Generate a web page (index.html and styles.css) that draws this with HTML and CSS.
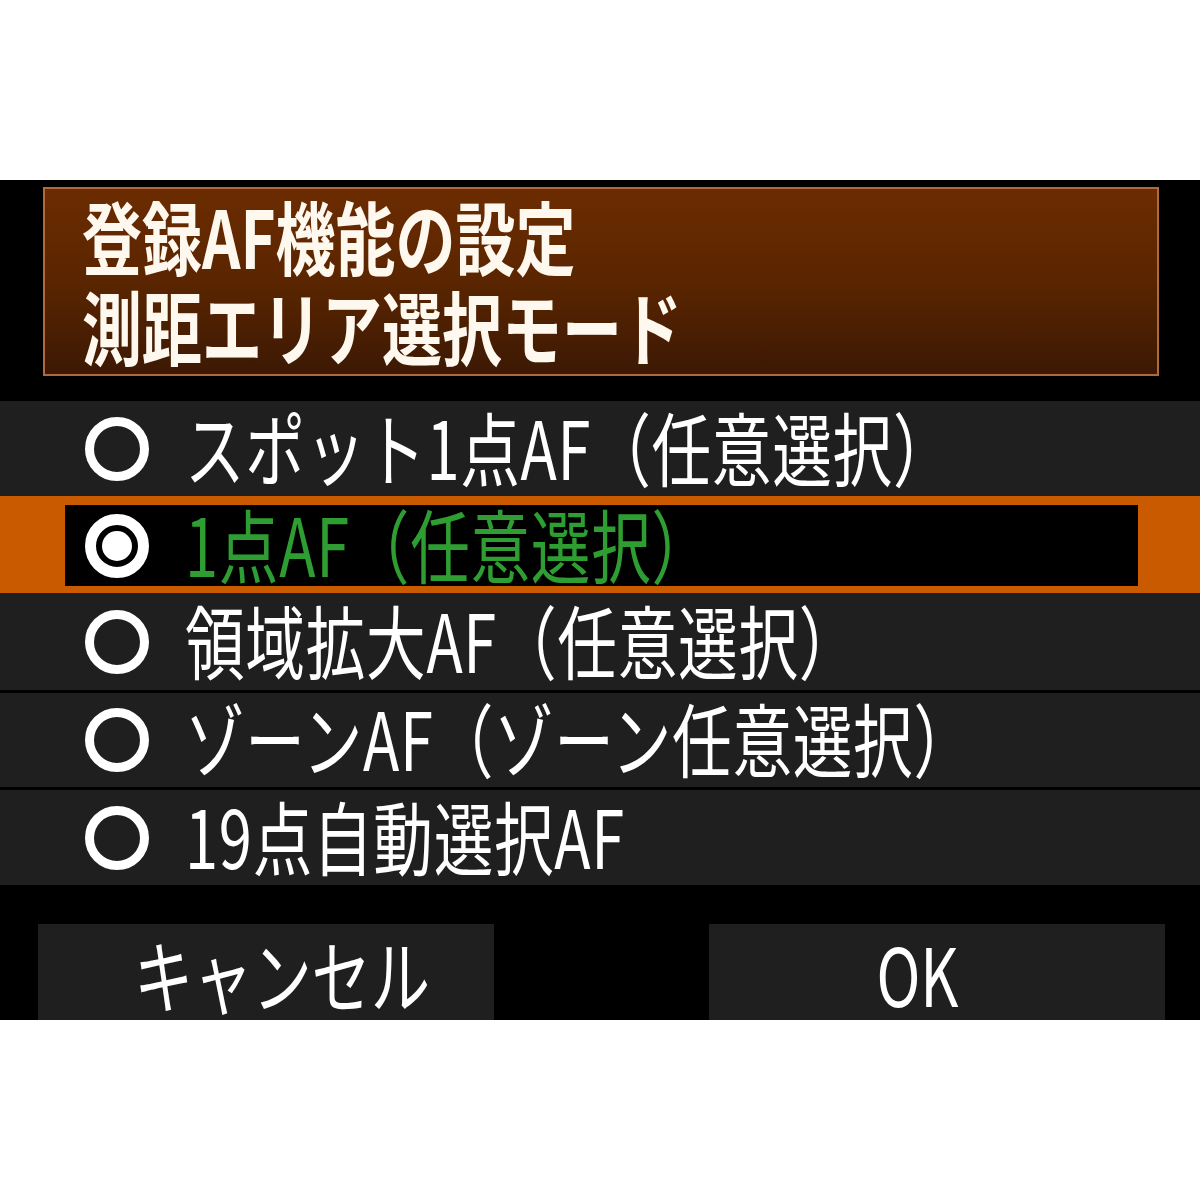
FILE: index.html
```html
<!DOCTYPE html>
<html lang="ja">
<head>
<meta charset="utf-8">
<title>登録AF機能の設定</title>
<link rel="stylesheet" href="styles.css">
</head>
<body>
<div class="panel">
  <div class="header">
    <div class="hline"><span class="sq">登録AF機能の設定</span></div>
    <div class="hline"><span class="sq">測距エリア選択モード</span></div>
  </div>
  <div class="list">
    <div class="row r1"><span class="radio"></span><span class="label"><span class="sq">スポット1点AF（任意選択）</span></span></div>
    <div class="row sel">
      <div class="selbox"><span class="radio on"><span class="dot"></span></span><span class="label green"><span class="sq">1点AF（任意選択）</span></span></div>
    </div>
    <div class="row r3"><span class="radio"></span><span class="label"><span class="sq">領域拡大AF（任意選択）</span></span></div>
    <div class="row r4"><span class="radio"></span><span class="label"><span class="sq">ゾーンAF（ゾーン任意選択）</span></span></div>
    <div class="row r5"><span class="radio"></span><span class="label"><span class="sq">19点自動選択AF</span></span></div>
  </div>
  <div class="buttons">
    <div class="btn cancel"><span class="sqc">キャンセル</span></div>
    <div class="btn ok"><span class="sqc">OK</span></div>
  </div>
</div>
</body>
</html>
```
FILE: styles.css
```css
html, body {
  margin: 0;
  padding: 0;
  background: #ffffff;
}
body {
  width: 1200px;
  height: 1200px;
  font-family: "Noto Sans CJK JP", "Noto Sans", sans-serif;
  text-spacing-trim: space-all;
}
.panel {
  margin-top: 180px;
  height: 840px;
  background: #000000;
  overflow: hidden;
  padding-top: 7px;
  box-sizing: border-box;
}
.header {
  margin-left: 43px;
  width: 1116px;
  height: 189px;
  box-sizing: border-box;
  border: 2px solid #b06a40;
  background: linear-gradient(to bottom, #6c2c00 0%, #5a2500 50%, #3c1904 100%);
  padding-left: 37px;
  color: #fff8ef;
}
.hline {
  height: 90px;
  line-height: 80px;
  padding-top: 5px;
  box-sizing: border-box;
  font-size: 80px;
  font-weight: 600;
  white-space: nowrap;
}
.sq {
  display: inline-block;
  transform: scaleX(0.75);
  transform-origin: left center;
  white-space: nowrap;
}
.list {
  margin-top: 25px;
  display: flex;
  flex-direction: column;
}
.row {
  background: #1f1f1f;
  display: flex;
  align-items: center;
  padding-left: 85px;
  box-sizing: border-box;
  color: #ffffff;
}
.r1 { height: 95px; }
.r3 { height: 97px; }
.r4 { height: 97px; border-top: 3px solid #000; }
.r5 { height: 98px; border-top: 3px solid #000; }
.sel {
  height: 97px;
  background: #c95a00;
  padding: 9px 62px 7px 65px;
  align-items: stretch;
}
.selbox {
  flex: 1;
  background: #000000;
  display: flex;
  align-items: center;
  padding-left: 20px;
}
.radio {
  width: 64px;
  height: 64px;
  box-sizing: border-box;
  border: 9px solid #ffffff;
  border-radius: 50%;
  flex: none;
  display: flex;
  align-items: center;
  justify-content: center;
}
.radio.on {
  border-width: 11px;
}
.dot {
  width: 30px;
  height: 30px;
  border-radius: 50%;
  background: #ffffff;
}
.label {
  margin-left: 36px;
  font-size: 80px;
  line-height: 80px;
  padding-bottom: 8px;
  white-space: nowrap;
  flex: 1;
  min-width: 0;
}
.label .sq {
  transform: scaleX(0.745);
  letter-spacing: 1px;
}
.green {
  color: #2f9e32;
}
.buttons {
  margin-top: 39px;
  display: flex;
  justify-content: space-between;
  padding: 0 35px 0 38px;
}
.btn {
  background: #1f1f1f;
  height: 96px;
  display: flex;
  align-items: center;
  justify-content: center;
  color: #ffffff;
  font-size: 80px;
  line-height: 80px;
}
.cancel {
  width: 456px;
  padding-left: 32px;
  box-sizing: border-box;
}
.ok {
  width: 456px;
  padding-right: 38px;
  box-sizing: border-box;
}
.sqc {
  display: inline-block;
  transform: scaleX(0.74);
  transform-origin: center center;
  white-space: nowrap;
}
```
